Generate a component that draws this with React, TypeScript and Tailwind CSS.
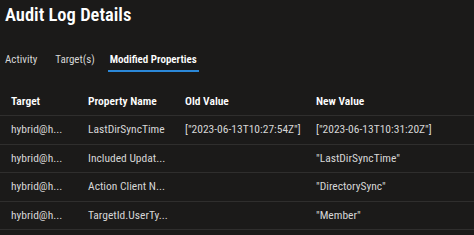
const rows = [
  { target: "hybrid@h...", prop: "LastDirSyncTime", oldV: '["2023-06-13T10:27:54Z"]', newV: '["2023-06-13T10:31:20Z"]' },
  { target: "hybrid@h...", prop: "Included Updat...", oldV: "", newV: '"LastDirSyncTime"' },
  { target: "hybrid@h...", prop: "Action Client N...", oldV: "", newV: '"DirectorySync"' },
  { target: "hybrid@h...", prop: "TargetId.UserTy...", oldV: "", newV: '"Member"' },
];

export default function App() {
  return (
    <div
      className="h-[235px] w-[474px] overflow-hidden bg-[#1b1a19] text-[#d6d6d6]"
      style={{ fontFamily: '"Roboto Condensed", "Open Sans Condensed", sans-serif' }}
    >
      <h1 className="px-[5px] pt-[1px] text-[18.5px] font-semibold leading-[28px] text-white">
        Audit Log Details
      </h1>
      <div className="mt-[23px] flex items-end px-[5px] text-[11px] leading-[16px]">
        <div className="pb-[4px] text-[#d6d6d6]">Activity</div>
        <div className="ml-[18px] pb-[4px] text-[#d6d6d6]">Target(s)</div>
        <div className="ml-[13px] border-b-2 border-[#2b88d8] px-[2px] pb-[2px] font-semibold text-white">
          Modified Properties
        </div>
      </div>
      <div className="mt-[14px] text-[11.5px]">
        <div className="grid h-[30px] grid-cols-[77px_97px_131px_1fr] items-center border-b border-[#2f2e2d] pl-[11px] pt-[2px] font-semibold text-white">
          <div>Target</div>
          <div>Property Name</div>
          <div>Old Value</div>
          <div>New Value</div>
        </div>
        {rows.map((r, i) => (
          <div
            key={i}
            className="grid h-[28.5px] grid-cols-[77px_97px_131px_1fr] items-center border-b border-[#2f2e2d] pl-[11px]"
          >
            <div className="whitespace-nowrap">{r.target}</div>
            <div className="whitespace-nowrap">{r.prop}</div>
            <div className="whitespace-nowrap">{r.oldV}</div>
            <div className="whitespace-nowrap">{r.newV}</div>
          </div>
        ))}
      </div>
    </div>
  );
}
